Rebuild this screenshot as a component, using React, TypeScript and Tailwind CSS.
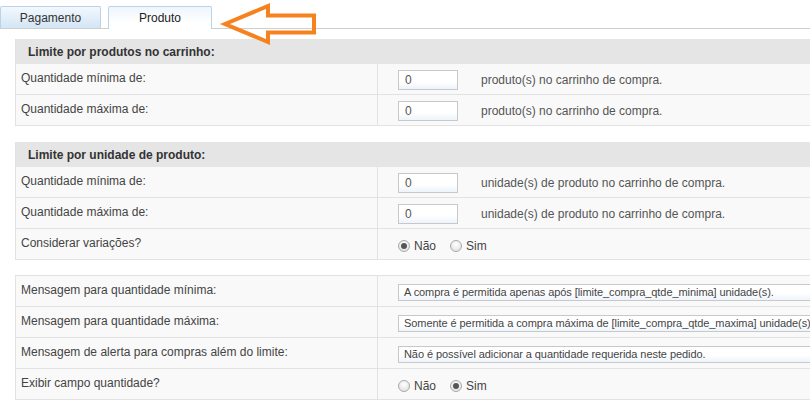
import type { ReactNode } from "react";

const font = { fontFamily: '"Liberation Sans", Arial, sans-serif' };

const Row = ({ label, children, tall = false }: { label: string; children: ReactNode; tall?: boolean }) => (
  <div className="flex h-[31px] border-b border-[#e2e2e2] bg-[#f9f9f9]">
    <div className="w-[362px] shrink-0 border-r border-[#e2e2e2] pl-[5px] pt-[6px] text-[12px] leading-[16px] text-[#444]">
      {label}
    </div>
    <div className={`flex flex-1 items-start pl-[20px] ${tall ? "pt-[8px]" : "pt-[6px]"}`}>{children}</div>
  </div>
);

const SmallInput = ({ after }: { after: string }) => (
  <>
    <div className="flex h-[20px] w-[60px] items-center border border-[#c8c8c8] bg-[linear-gradient(#ffffff_60%,#edf4fb)] pl-[6px] text-[12px] text-[#555]">
      0
    </div>
    <span className="ml-[23px] pt-[2px] text-[12px] leading-[16px] text-[#555]">{after}</span>
  </>
);

const WideInput = ({ value }: { value: string }) => (
  <div className="flex h-[17px] w-[450px] items-center overflow-hidden border border-[#c8c8c8] bg-[linear-gradient(#ffffff_55%,#edf4fb)] pl-[5px] text-[11px] tracking-[-0.07px] text-[#444] whitespace-nowrap">
    {value}
  </div>
);

const Radio = ({ checked, label }: { checked: boolean; label: string }) => (
  <label className="mr-[14px] flex items-center text-[12px] text-[#444]">
    <span className="mr-[4px] flex h-[12px] w-[12px] items-center justify-center rounded-full border border-[#a9a9a9] bg-[radial-gradient(circle_at_50%_35%,#ffffff,#dcdcdc)]">
      {checked && <span className="h-[6px] w-[6px] rounded-full bg-[#555]" />}
    </span>
    {label}
  </label>
);

const Radios = ({ yes }: { yes: boolean }) => (
  <div className="flex pt-[2px]">
    <Radio checked={!yes} label="Não" />
    <Radio checked={yes} label="Sim" />
  </div>
);

const Header = ({ title }: { title: string }) => (
  <div className="h-[25px] bg-[#e5e5e5] pl-[12px] pt-[5px] text-[12px] font-bold leading-[16px] text-[#333]">{title}</div>
);

export default function App() {
  return (
    <div className="relative h-[408px] w-[810px] overflow-hidden bg-white" style={font}>
      <div className="flex h-[29px] items-end border-b border-[#cfcfcf] pt-[7px]">
        <div className="flex h-[22px] w-[101px] items-center justify-center rounded-t-[2px] border border-b-0 border-[#b9d3ea] bg-[linear-gradient(#f3f8fd,#d3e5f5)] text-[12px] text-[#333]">
          Pagamento
        </div>
        <div className="relative -mb-px ml-[7px] flex h-[23px] w-[104px] items-center justify-center rounded-t-[2px] border border-b-0 border-[#b9d3ea] bg-[linear-gradient(#eef5fc,#ffffff_70%)] text-[12px] text-[#222]">
          Produto
        </div>
      </div>

      <svg className="absolute left-0 top-0" width="330" height="50" viewBox="0 0 330 50">
        <polygon
          points="225,24 268,6 268,15.5 314,15.5 314,32.5 268,32.5 268,42"
          fill="none"
          stroke="#f6821f"
          strokeWidth="4"
          strokeLinejoin="miter"
        />
      </svg>

      <div className="ml-[15px] mt-[10px] w-[830px] border-l border-[#e2e2e2]">
        <Header title="Limite por produtos no carrinho:" />
        <Row label="Quantidade mínima de:">
          <SmallInput after="produto(s) no carrinho de compra." />
        </Row>
        <Row label="Quantidade máxima de:">
          <SmallInput after="produto(s) no carrinho de compra." />
        </Row>
      </div>

      <div className="ml-[15px] mt-[16px] w-[830px] border-l border-[#e2e2e2]">
        <Header title="Limite por unidade de produto:" />
        <Row label="Quantidade mínima de:">
          <SmallInput after="unidade(s) de produto no carrinho de compra." />
        </Row>
        <Row label="Quantidade máxima de:">
          <SmallInput after="unidade(s) de produto no carrinho de compra." />
        </Row>
        <Row label="Considerar variações?">
          <Radios yes={false} />
        </Row>
      </div>

      <div className="ml-[15px] mt-[15px] w-[830px] border-l border-t border-[#e2e2e2]">
        <Row label="Mensagem para quantidade mínima:" tall>
          <WideInput value="A compra é permitida apenas após [limite_compra_qtde_minima] unidade(s)." />
        </Row>
        <Row label="Mensagem para quantidade máxima:" tall>
          <WideInput value="Somente é permitida a compra máxima de [limite_compra_qtde_maxima] unidade(s)" />
        </Row>
        <Row label="Mensagem de alerta para compras além do limite:" tall>
          <WideInput value="Não é possível adicionar a quantidade requerida neste pedido." />
        </Row>
        <Row label="Exibir campo quantidade?">
          <Radios yes={true} />
        </Row>
      </div>
    </div>
  );
}
